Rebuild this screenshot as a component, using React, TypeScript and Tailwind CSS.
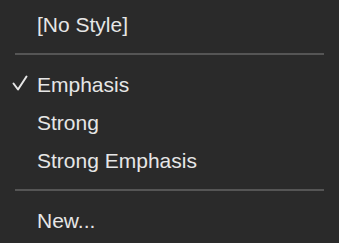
const rows: { label: string; checked?: boolean }[][] = [
  [{ label: '[No Style]' }],
  [{ label: 'Emphasis', checked: true }, { label: 'Strong' }, { label: 'Strong Emphasis' }],
  [{ label: 'New...' }],
];

export default function App() {
  return (
    <div
      className="h-[243px] w-[339px] overflow-hidden bg-[#2a2a2a] pt-[5px] text-[21px] text-[#e6e6e6]"
      style={{ fontFamily: '"Liberation Sans", Arial, sans-serif' }}
    >
      {rows.map((group, gi) => (
        <div key={gi}>
          {gi > 0 && (
            <div className="flex h-[22px] items-center px-[15px]">
              <div className="h-[2px] w-full bg-[#555555]" />
            </div>
          )}
          {group.map((item) => (
            <div key={item.label} className="relative flex h-[38px] items-center pl-[37px] leading-none">
              {item.checked && (
                <svg className="absolute left-[12px] top-[10px]" width="16" height="16" viewBox="0 0 16 16">
                  <path d="M1.5 8.5 L6 14.5 L14.5 1.5" fill="none" stroke="#e6e6e6" strokeWidth="2" strokeLinecap="round" strokeLinejoin="round" />
                </svg>
              )}
              {item.label}
            </div>
          ))}
        </div>
      ))}
    </div>
  );
}
